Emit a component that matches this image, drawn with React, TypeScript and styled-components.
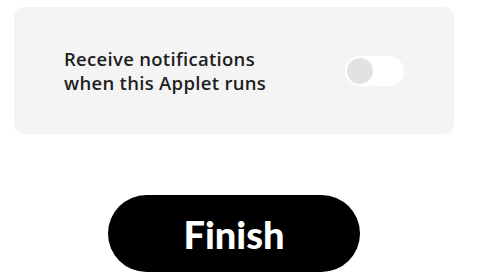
import styled, { createGlobalStyle } from "styled-components";

const GlobalStyle = createGlobalStyle`
  body {
    margin: 0;
    background: #ffffff;
    font-family: "Open Sans", "Noto Sans", sans-serif;
  }
`;

const Page = styled.div`
  width: 440px;
  padding: 7px 14px;
  display: flex;
  flex-direction: column;
  align-items: center;
`;

const Card = styled.div`
  box-sizing: border-box;
  width: 100%;
  height: 127px;
  padding: 0 50px;
  background: #f4f4f4;
  border-radius: 10px;
  display: flex;
  align-items: center;
  justify-content: space-between;
`;

const Label = styled.div`
  font-family: "Open Sans", "Noto Sans", sans-serif;
  font-size: 18.5px;
  letter-spacing: 0.3px;
  line-height: 24px;
  font-weight: 600;
  color: #1e1e1e;
`;

const Track = styled.button<{ $on: boolean }>`
  box-sizing: border-box;
  width: 59px;
  height: 30px;
  padding: 2px;
  border: none;
  border-radius: 15px;
  background: ${(p) => (p.$on ? "#222222" : "#ffffff")};
  display: flex;
  justify-content: ${(p) => (p.$on ? "flex-end" : "flex-start")};
  align-items: center;
  cursor: pointer;
`;

const Knob = styled.span`
  width: 26px;
  height: 26px;
  border-radius: 50%;
  background: #e2e2e2;
`;

const FinishButton = styled.button`
  margin-top: 61px;
  width: 252px;
  height: 77px;
  border: none;
  border-radius: 39px;
  background: #000000;
  color: #ffffff;
  font-family: Lato, "Noto Sans", sans-serif;
  font-size: 38px;
  font-weight: 900;
  cursor: pointer;
`;

export default function App() {
  return (
    <>
      <GlobalStyle />
      <Page>
        <Card>
          <Label>
            Receive notifications
            <br />
            when this Applet runs
          </Label>
          <Track $on={false}>
            <Knob />
          </Track>
        </Card>
        <FinishButton>Finish</FinishButton>
      </Page>
    </>
  );
}
